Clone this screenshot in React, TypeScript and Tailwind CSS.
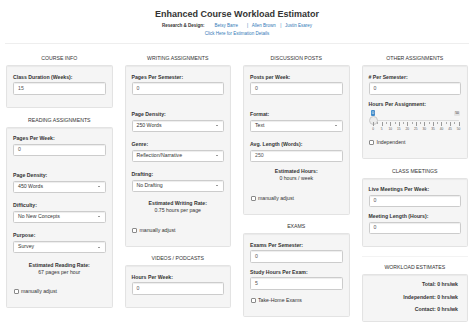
import type { ReactNode } from 'react'

const TICKS = [0, 5, 10, 15, 20, 25, 30, 35, 40, 45, 50]

function Heading({ children, className = '' }: { children: ReactNode; className?: string }) {
  return (
    <div className={`mb-[3px] h-[7px] text-center text-[5.2px] uppercase leading-[7px] text-[#333] ${className}`}>
      {children}
    </div>
  )
}

function Panel({ children, className = 'pt-[7.5px] pb-[12px] px-[6px]' }: { children: ReactNode; className?: string }) {
  return (
    <div className={`rounded-[1.5px] border border-[#e3e3e3] bg-[#f5f5f5] shadow-[inset_0_1px_1px_rgba(0,0,0,0.05)] ${className}`}>
      {children}
    </div>
  )
}

function Field({ label, children, mb = 0 }: { label: string; children: ReactNode; mb?: number }) {
  return (
    <div style={{ marginBottom: mb }}>
      <div className="mb-[1.5px] h-[7px] text-[5.2px] font-bold leading-[7px] text-[#333]">{label}</div>
      {children}
    </div>
  )
}

function NumInput({ value }: { value: string }) {
  return (
    <div className="flex h-[12.6px] items-center rounded-[1.5px] border border-[#ccc] bg-white px-[4px] text-[5.2px] text-[#555] shadow-[inset_0_1px_1px_rgba(0,0,0,0.075)]">
      {value}
    </div>
  )
}

function Select({ value }: { value: string }) {
  return (
    <div className="flex h-[12.6px] items-center justify-between rounded-[1.5px] border border-[#ccc] bg-white pl-[4px] pr-[5px] text-[5.2px] text-[#333] shadow-[inset_0_1px_1px_rgba(0,0,0,0.075)]">
      <span>{value}</span>
      <span className="h-0 w-0 border-x-[1.5px] border-t-[1.8px] border-x-transparent border-t-[#333]" />
    </div>
  )
}

function Estimate({ title, value, mb }: { title: string; value: string; mb: number }) {
  return (
    <div className="text-center text-[5.2px] leading-[7px] text-[#333]" style={{ marginBottom: mb }}>
      <div className="font-bold">{title}</div>
      <div>{value}</div>
    </div>
  )
}

function Check({ label }: { label: string }) {
  return (
    <div className="flex h-[7px] items-center gap-[2.5px] text-[5.2px] leading-[7px] text-[#333]">
      <span className="ml-[0.5px] h-[5px] w-[5px] rounded-[1px] border border-[#8a8a8a] bg-white" />
      {label}
    </div>
  )
}

function Slider() {
  // ion.rangeSlider look: value badge, max badge, track, handle, grid
  const left = 4.7
  const step = 8.53
  return (
    <div className="relative mb-[7.5px] mt-[0.5px] h-[22px]">
      <div className="absolute left-[2px] top-0 h-[6px] rounded-[1px] bg-[#428bca] px-[1.3px] text-[4px] leading-[6px] text-white">0</div>
      <div className="absolute right-[1px] top-[1px] h-[5px] rounded-[1px] bg-[#e4e4e4] px-[1px] text-[3.4px] leading-[5px] text-[#333]">50</div>
      <div className="absolute left-[4.7px] right-[2px] top-[10px] h-[1.4px] rounded-full bg-[#dcdcdc]" />
      <div className="absolute left-0 top-[6.5px] h-[9px] w-[9px] rounded-full border border-[#c8c8c8] bg-[#ececec]" />
      {TICKS.map((t, i) => (
        <div key={t}>
          <div className="absolute top-[12.8px] h-[3.6px] w-[0.6px] bg-[#999]" style={{ left: left + i * step }} />
          {i < TICKS.length - 1 && (
            <div className="absolute top-[12.8px] h-[1.8px] w-[0.6px] bg-[#aaa]" style={{ left: left + i * step + step / 2 }} />
          )}
          <div
            className="absolute top-[17.5px] w-[8px] text-center text-[3.2px] leading-[4px] text-[#555]"
            style={{ left: left + i * step - 4 }}
          >
            {t}
          </div>
        </div>
      ))}
    </div>
  )
}

export default function App() {
  return (
    <div className="h-[333px] w-[474px] overflow-hidden bg-white font-['Liberation_Sans',Arial,sans-serif] text-[#333]">
      {/* Header */}
      <div className="pt-[8.5px] text-center">
        <div className="text-[9px] font-bold leading-[10px]">Enhanced Course Workload Estimator</div>
        <div className="mt-[3.5px] text-[4.5px] leading-[7.7px]">
          <span className="font-bold">Research &amp; Design:</span>
          <span className="ml-[10px] text-[#337ab7]">Betsy Barre</span>
          <span className="ml-[9px] text-[#337ab7]">|</span>
          <span className="ml-[3.5px] text-[#337ab7]">Allen Brown</span>
          <span className="ml-[4.5px] text-[#337ab7]">|</span>
          <span className="ml-[3.5px] text-[#337ab7]">Justin Esarey</span>
        </div>
        <div className="text-[4.5px] leading-[7.7px] text-[#337ab7]">Click Here for Estimation Details</div>
      </div>
      <div className="mx-[5px] mt-[5.5px] border-t border-[#eee]" />

      <div className="mt-[11.5px] flex gap-[12px] px-[6px]">
        {/* Column 1 */}
        <div className="flex flex-1 flex-col">
          <Heading>Course Info</Heading>
          <Panel>
            <Field label="Class Duration (Weeks):">
              <NumInput value="15" />
            </Field>
          </Panel>
          <Heading className="mt-[8.5px]">Reading Assignments</Heading>
          <Panel>
            <Field label="Pages Per Week:" mb={16}>
              <NumInput value="0" />
            </Field>
            <Field label="Page Density:" mb={9}>
              <Select value="450 Words" />
            </Field>
            <Field label="Difficulty:" mb={9}>
              <Select value="No New Concepts" />
            </Field>
            <Field label="Purpose:" mb={8.5}>
              <Select value="Survey" />
            </Field>
            <Estimate title="Estimated Reading Rate:" value="67 pages per hour" mb={12.5} />
            <Check label="manually adjust" />
          </Panel>
        </div>

        {/* Column 2 */}
        <div className="flex flex-1 flex-col">
          <Heading>Writing Assignments</Heading>
          <Panel>
            <Field label="Pages Per Semester:" mb={16}>
              <NumInput value="0" />
            </Field>
            <Field label="Page Density:" mb={9}>
              <Select value="250 Words" />
            </Field>
            <Field label="Genre:" mb={9}>
              <Select value="Reflection/Narrative" />
            </Field>
            <Field label="Drafting:" mb={8}>
              <Select value="No Drafting" />
            </Field>
            <Estimate title="Estimated Writing Rate:" value="0.75 hours per page" mb={12.5} />
            <Check label="manually adjust" />
          </Panel>
          <Heading className="mt-[8.5px]">Videos / Podcasts</Heading>
          <Panel>
            <Field label="Hours Per Week:">
              <NumInput value="0" />
            </Field>
          </Panel>
        </div>

        {/* Column 3 */}
        <div className="flex flex-1 flex-col">
          <Heading>Discussion Posts</Heading>
          <Panel>
            <Field label="Posts per Week:" mb={16}>
              <NumInput value="0" />
            </Field>
            <Field label="Format:" mb={9}>
              <Select value="Text" />
            </Field>
            <Field label="Avg. Length (Words):" mb={6}>
              <NumInput value="250" />
            </Field>
            <Estimate title="Estimated Hours:" value="0 hours / week" mb={12.5} />
            <Check label="manually adjust" />
          </Panel>
          <Heading className="mt-[8.5px]">Exams</Heading>
          <Panel>
            <Field label="Exams Per Semester:" mb={6}>
              <NumInput value="0" />
            </Field>
            <Field label="Study Hours Per Exam:" mb={7}>
              <NumInput value="5" />
            </Field>
            <Check label="Take-Home Exams" />
          </Panel>
        </div>

        {/* Column 4 */}
        <div className="flex flex-1 flex-col">
          <Heading>Other Assignments</Heading>
          <Panel>
            <Field label="# Per Semester:" mb={6}>
              <NumInput value="0" />
            </Field>
            <Field label="Hours Per Assignment:">
              <Slider />
            </Field>
            <Check label="Independent" />
          </Panel>
          <Heading className="mt-[8.5px]">Class Meetings</Heading>
          <Panel>
            <Field label="Live Meetings Per Week:" mb={6}>
              <NumInput value="0" />
            </Field>
            <Field label="Meeting Length (Hours):">
              <NumInput value="0" />
            </Field>
          </Panel>
          <div className="mt-[9px] border-t border-[#f3f3f3]" />
          <Heading className="mt-[7px]">Workload Estimates</Heading>
          <Panel className="pb-[8px] pl-[6px] pr-[9px] pt-[6px]">
            <div className="flex flex-col gap-[5.5px] text-right text-[5.2px] font-bold leading-[7px]">
              <div>Total: 0 hrs/wk</div>
              <div>Independent: 0 hrs/wk</div>
              <div>Contact: 0 hrs/wk</div>
            </div>
          </Panel>
        </div>
      </div>
    </div>
  )
}
